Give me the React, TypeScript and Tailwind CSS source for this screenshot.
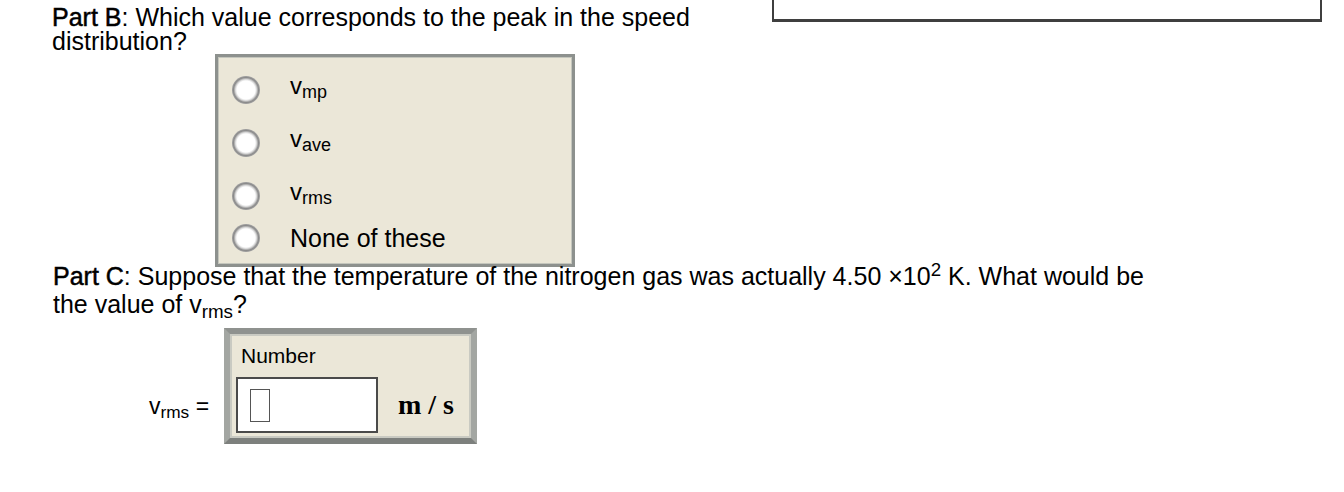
export default function App() {
  const radio =
    "w-[28px] h-[28px] rounded-full shrink-0 bg-[radial-gradient(circle,#ffffff_0%,#ffffff_46%,#dcdcdc_53%,#8a8a8a_63%,#b8b8b8_77%,#7a7a7a_91%,#5e5e5e_100%)]";
  const bold = "[-webkit-text-stroke:0.5px_#000]";
  return (
    <div className="w-[1344px] h-[492px] bg-white overflow-hidden font-['Liberation_Sans',Arial,sans-serif] text-black text-[25px] leading-[24px]">
      <div className="flex items-start">
        <div className="ml-[52px] w-[700px] pt-[5px]">
          <p className="w-[660px]">
            <span className={bold}>Part B</span>: Which value corresponds to the peak in the speed distribution?
          </p>
          <div className="ml-[163px] mt-[1px] w-[360px] h-[213px] bg-[#ebe7d8] border-[3px] border-[#8d918e] shadow-[inset_0_0_0_1px_#c4c6bd] pl-[14px] pt-[6px] flex flex-col">
            <div className="h-[53px] flex items-center gap-[30px]">
              <span className={radio} />
              <span className="text-[24px] mb-[8px]">
                v<sub>mp</sub>
              </span>
            </div>
            <div className="h-[53px] flex items-center gap-[30px]">
              <span className={radio} />
              <span className="text-[24px] mb-[8px]">
                v<sub>ave</sub>
              </span>
            </div>
            <div className="h-[53px] flex items-center gap-[30px]">
              <span className={radio} />
              <span className="text-[24px] mb-[8px]">
                v<sub>rms</sub>
              </span>
            </div>
            <div className="h-[32px] flex items-center gap-[30px]">
              <span className={radio} />
              <span>None of these</span>
            </div>
          </div>
        </div>
        <div className="ml-[20px] w-[550px] h-[22px] bg-white border-l-2 border-r-2 border-b-[3px] border-[#3f3f3f]" />
      </div>

      <div className="relative ml-[53px] mt-[-5px] w-[1120px]">
        <p className="leading-[28px]">
          <span className={bold}>Part C</span>: Suppose that the temperature of the nitrogen gas was actually 4.50 ×10<sup>2</sup> K. What would be the value of v<sub>rms</sub>?
        </p>
      </div>

      <div className="flex items-start ml-[149px] mt-[10px] gap-[14px]">
        <div className="w-[61px] mt-[66px] text-[23px] leading-[24px] whitespace-nowrap">
          v<sub>rms</sub> =
        </div>
        <div className="w-[253px] h-[116px] bg-[#ebe7d8] border-[6px] border-t-[#8f928f] border-l-[#a3a6a2] border-r-[#a3a6a2] border-b-[#7d807d] shadow-[inset_0_0_0_2px_#c9cac2] pl-[6px]">
          <div className="pl-[5px] pt-[10px] text-[21px] leading-[24px]">Number</div>
          <div className="flex items-center mt-[9px]">
            <div className="w-[142px] h-[56px] bg-white border-2 border-[#4a4a4a] flex items-center pl-[12px]">
              <div className="w-[20px] h-[33px] border border-[#555]" />
            </div>
            <span className="ml-[20px] font-['Liberation_Serif',serif] font-bold text-[28px]">m / s</span>
          </div>
        </div>
      </div>
    </div>
  );
}
